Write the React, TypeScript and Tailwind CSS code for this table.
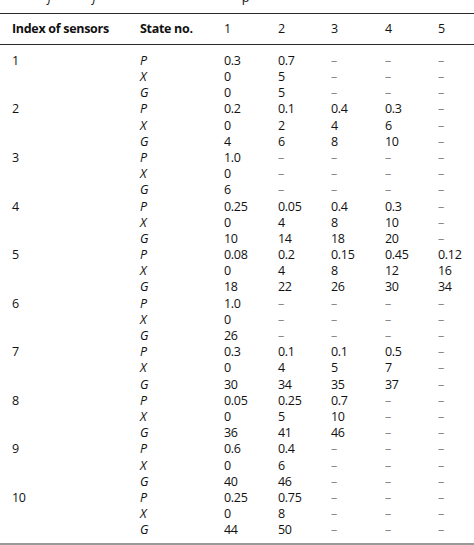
const dash = "–";

type Row = { idx: string; s: string; v: string[] };

const data: [string, string[], string[], string[]][] = [
  ["1", ["0.3", "0.7"], ["0", "5"], ["0", "5"]],
  ["2", ["0.2", "0.1", "0.4", "0.3"], ["0", "2", "4", "6"], ["4", "6", "8", "10"]],
  ["3", ["1.0"], ["0"], ["6"]],
  ["4", ["0.25", "0.05", "0.4", "0.3"], ["0", "4", "8", "10"], ["10", "14", "18", "20"]],
  ["5", ["0.08", "0.2", "0.15", "0.45", "0.12"], ["0", "4", "8", "12", "16"], ["18", "22", "26", "30", "34"]],
  ["6", ["1.0"], ["0"], ["26"]],
  ["7", ["0.3", "0.1", "0.1", "0.5"], ["0", "4", "5", "7"], ["30", "34", "35", "37"]],
  ["8", ["0.05", "0.25", "0.7"], ["0", "5", "10"], ["36", "41", "46"]],
  ["9", ["0.6", "0.4"], ["0", "6"], ["40", "46"]],
  ["10", ["0.25", "0.75"], ["0", "8"], ["44", "50"]],
];

const rows: Row[] = data.flatMap(([idx, p, x, g]) => [
  { idx, s: "P", v: p },
  { idx: "", s: "X", v: x },
  { idx: "", s: "G", v: g },
]);

const cols = "grid grid-cols-[128px_84px_54px_53px_54px_53px_1fr] pl-3";

export default function App() {
  return (
    <div className="w-[474px] h-[545px] overflow-hidden bg-white text-[#111] text-[12.5px] tracking-[-0.3px]" style={{ fontFamily: '"Open Sans", "Noto Sans", sans-serif' }}>
      <div className="h-[6px] overflow-hidden relative">
        <div className="absolute bottom-[0px] left-3 leading-[16px] whitespace-nowrap italic">
          <span className="ml-[36px]">j</span>
          <span className="ml-[42px]">j</span>
          <span className="ml-[146px] not-italic">p</span>
        </div>
      </div>
      <div className="h-[7px]" />
      <div className="border-t-[1.5px] border-[#2a2a2a]" />
      <div className={`${cols} h-[30px] items-center font-bold`}>
        <div>Index of sensors</div>
        <div>State no.</div>
        <div className="font-normal">1</div>
        <div className="font-normal">2</div>
        <div className="font-normal">3</div>
        <div className="font-normal">4</div>
        <div className="font-normal">5</div>
      </div>
      <div className="border-t-[1.5px] border-[#2a2a2a]" />
      <div className="pt-[8px] pb-[4px]">
        {rows.map((r, i) => (
          <div key={i} className={`${cols} h-[16.2px] items-center leading-none`}>
            <div>{r.idx}</div>
            <div className="italic">{r.s}</div>
            {[0, 1, 2, 3, 4].map((k) => (
              <div key={k} className={r.v[k] ? "" : "text-[#888]"}>{r.v[k] ?? dash}</div>
            ))}
          </div>
        ))}
      </div>
      <div className="border-t-[2px] border-[#999]" />
    </div>
  );
}
